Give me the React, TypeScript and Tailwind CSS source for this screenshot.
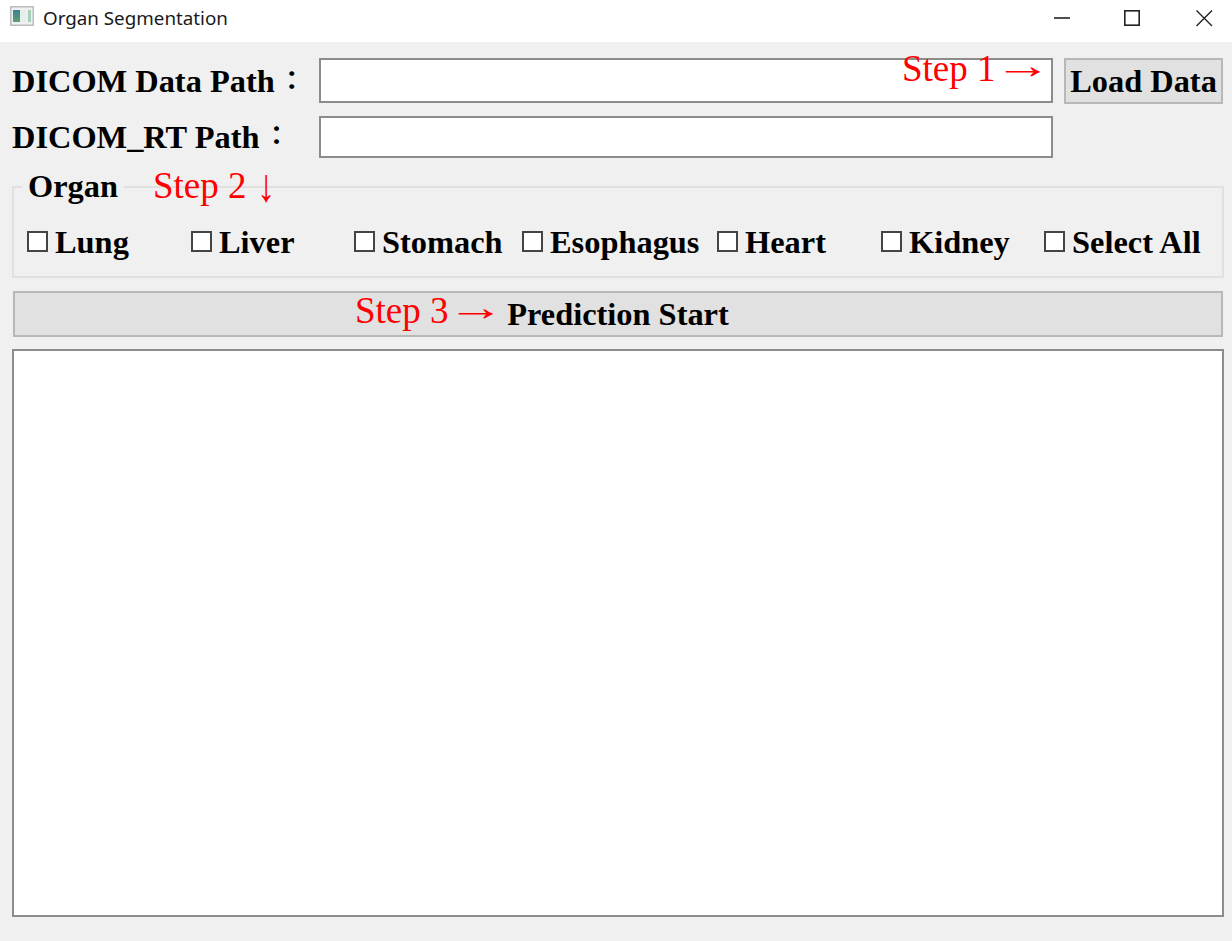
const organs = [
  { name: 'Lung', width: 'w-[164px]' },
  { name: 'Liver', width: 'w-[163px]' },
  { name: 'Stomach', width: 'w-[168px]' },
  { name: 'Esophagus', width: 'w-[195px]' },
  { name: 'Heart', width: 'w-[164px]' },
  { name: 'Kidney', width: 'w-[163px]' },
  { name: 'Select All', width: 'w-[165px]' },
]

const serif = "font-['Liberation_Serif','Noto_Sans_CJK_TC',serif]"

function AppIcon() {
  return (
    <svg width="24" height="20" viewBox="0 0 24 20" className="mb-[5px] ml-[10px] shrink-0">
      <defs>
        <linearGradient id="pane" x1="0" y1="0" x2="0" y2="1">
          <stop offset="0" stopColor="#3a7f96" />
          <stop offset="1" stopColor="#5f9f6c" />
        </linearGradient>
      </defs>
      <rect x="0.75" y="0.75" width="22.5" height="18.5" fill="#eef1f2" stroke="#bcbcbc" strokeWidth="1.5" />
      <rect x="3" y="4" width="7" height="12" fill="url(#pane)" />
      <rect x="10" y="4" width="6" height="12" fill="#e6eee8" />
      <rect x="18" y="4" width="3" height="12" fill="#a9cdb8" />
    </svg>
  )
}

function WindowControls() {
  return (
    <svg width="178" height="42" viewBox="0 0 178 42" className="mt-[5px] ml-auto shrink-0" fill="none" stroke="#222" strokeWidth="1.6">
      <path d="M0 18 H16" />
      <rect x="70.8" y="10.8" width="14.4" height="14.4" />
      <path d="M142.5 10.5 L158 26 M158 10.5 L142.5 26" strokeWidth="1.4" />
    </svg>
  )
}

function Colon() {
  return <span className="ml-[4px] text-[26px] leading-none">：</span>
}

export default function App() {
  return (
    <div className={`relative h-[941px] w-[1232px] overflow-hidden bg-[#f0f0f0] text-black ${serif}`}>
      {/* Title bar */}
      <div className="flex h-[42px] items-center overflow-hidden bg-white pb-[5px]">
        <AppIcon />
        <span className="ml-[9px] font-['Noto_Sans',sans-serif] text-[18.8px] text-[#1a1a1a]">Organ Segmentation</span>
        <WindowControls />
      </div>

      <div className="pl-3">
        {/* Path rows */}
        <div className="mt-4 flex h-[46px] items-start">
          <label className="flex h-[47px] w-[307px] shrink-0 items-center text-[32.4px] leading-none font-bold whitespace-nowrap">
            DICOM Data Path<Colon />
          </label>
          <div className="h-[45px] w-[734px] shrink-0 border-2 border-[#8c8c8c] bg-white" />
          <button className="ml-[11px] h-[46px] w-[159px] shrink-0 border-2 border-[#b8b8b8] bg-[#e1e1e1] text-[32.4px] leading-none font-bold whitespace-nowrap">
            Load Data
          </button>
        </div>
        <div className="mt-3 flex h-[42px] items-start">
          <label className="flex h-[42px] w-[307px] shrink-0 items-center text-[32.4px] leading-none font-bold whitespace-nowrap">
            DICOM_RT Path<Colon />
          </label>
          <div className="h-[42px] w-[734px] shrink-0 border-2 border-[#8c8c8c] bg-white" />
        </div>

        {/* Organ group */}
        <div className="mt-[28px] flex h-[92px] w-[1212px] items-center border-2 border-[#e0e0e0] pt-[20px] pl-[13px]">
          {organs.map((organ) => (
            <label key={organ.name} className={`flex shrink-0 items-center ${organ.width}`}>
              <span className="mb-[2px] h-[21px] w-[21px] shrink-0 border-2 border-[#444] bg-white" />
              <span className="ml-[7px] text-[32.4px] leading-none font-bold whitespace-nowrap">{organ.name}</span>
            </label>
          ))}
        </div>

        {/* Prediction button */}
        <button className="mt-[13px] ml-px flex h-[46px] w-[1210px] items-center justify-center border-2 border-[#b8b8b8] bg-[#e1e1e1] text-[32.4px] leading-none font-bold">
          Prediction Start
        </button>

        {/* Output */}
        <div className="mt-3 h-[568px] w-[1212px] border-2 border-[#8c8c8c] bg-white" />
      </div>

      {/* Group title sits on the frame */}
      <span className="absolute top-[169px] left-[22px] bg-[#f0f0f0] px-[6px] text-[32.4px] leading-[34px] font-bold">Organ</span>

      {/* Red annotations */}
      <span className="absolute top-[48px] left-[902px] text-[37px] leading-[42px] whitespace-nowrap text-[#ff0000]">
        Step 1 <span className="-ml-[1px] inline-block -translate-y-[3px] scale-x-[1.55]">→</span>
      </span>
      <span className="absolute top-[165px] left-[153px] text-[37px] leading-[42px] whitespace-nowrap text-[#ff0000]">
        Step 2 <span className="ml-px inline-block scale-y-[1.25]">↓</span>
      </span>
      <span className="absolute top-[290px] left-[355px] text-[37px] leading-[42px] whitespace-nowrap text-[#ff0000]">
        Step 3 <span className="-ml-[1px] inline-block -translate-y-[3px] scale-x-[1.55]">→</span>
      </span>
    </div>
  )
}
